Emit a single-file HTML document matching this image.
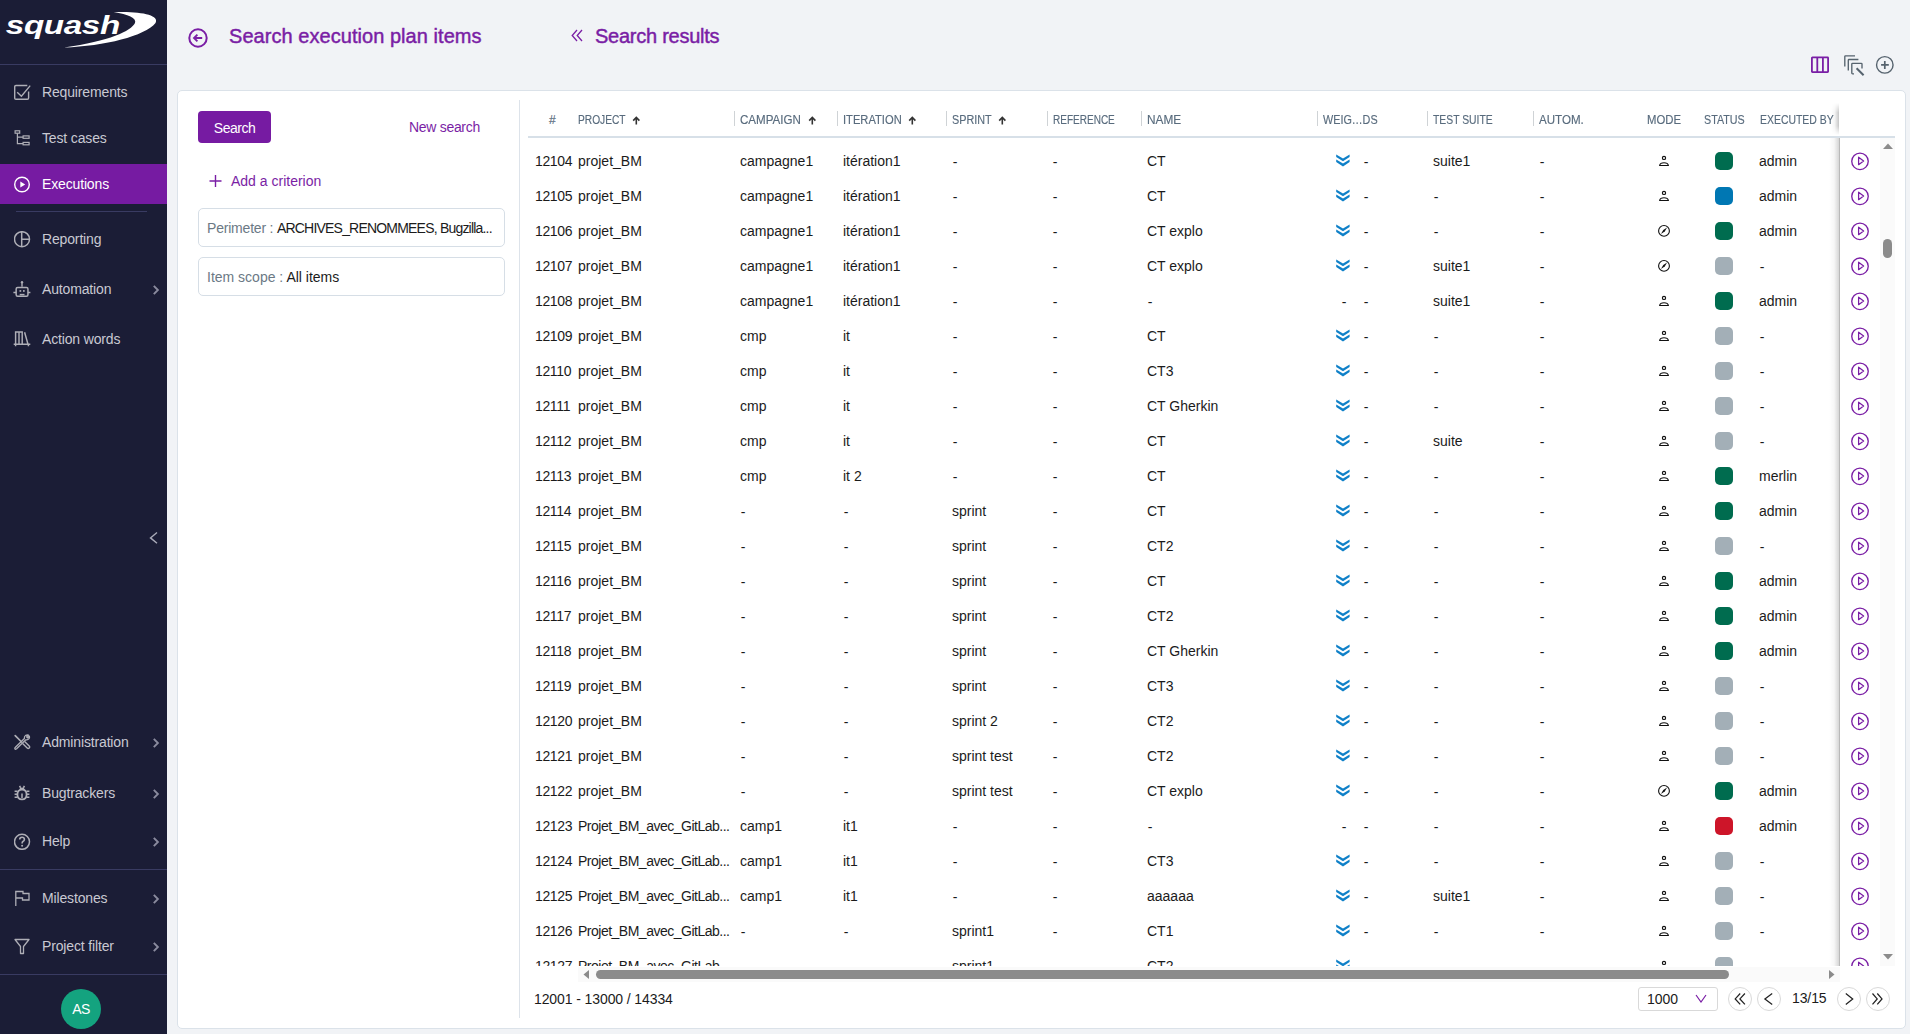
<!DOCTYPE html>
<html><head><meta charset="utf-8">
<style>
*{box-sizing:border-box;margin:0;padding:0}
html,body{width:1910px;height:1034px;overflow:hidden}
body{background:#f1f3f6;font-family:"Liberation Sans",sans-serif;color:#1b1b1b;position:relative}
.abs{position:absolute}
#side{position:absolute;left:0;top:0;width:167px;height:1034px;background:#1b1d36}
.nav{position:absolute;left:0;width:167px;height:40px;color:#c9c9d2;font-size:14px;letter-spacing:-0.15px}
.nav .lbl{position:absolute;left:42px;top:0;line-height:40px;white-space:nowrap}
.nav svg{position:absolute;left:14px;top:12px}
.nav .more{position:absolute;left:152px;top:15px}
.nav.active{background:#761ba2;color:#fff}
.hr{position:absolute;height:1px;background:#393b62}
#card{position:absolute;left:177px;top:90px;width:1729px;height:939px;background:#fff;border:1px solid #dbe2e9;border-radius:5px}
.ptitle{position:absolute;color:#7a1ea5;font-size:20px;white-space:nowrap;top:22px;line-height:28px;-webkit-text-stroke:0.45px #7a1ea5;letter-spacing:0.05px}
#grid{position:absolute;left:528px;top:100px;width:1367px;height:882px}
#ghead{position:absolute;left:0;top:0;width:1367px;height:38px;border-bottom:2px solid #d7e0e8}
.h{position:absolute;top:1px;line-height:38px;font-size:12px;color:#586b7d;white-space:nowrap;-webkit-text-stroke:0.15px #586b7d}
.ht{display:inline-block;transform-origin:0 50%}
.sep{position:absolute;top:11px;width:1px;height:15px;background:#cfd3d6}
.sarr{position:absolute;top:15.5px}
#vp{position:absolute;left:0;top:38px;width:1367px;height:828px;overflow:hidden}
.row{position:absolute;left:0;width:1367px;height:35px}
.c{position:absolute;top:0;line-height:35px;font-size:14px;white-space:nowrap;color:#1b1b1b}
.c.proj{letter-spacing:-0.5px}
.c.num{letter-spacing:-0.35px}
.c.dash{top:1px}
.ic{position:absolute;line-height:0}
.st{position:absolute;top:8.5px;width:18px;height:18px;border-radius:5px}
#pinshadow{position:absolute;left:1311px;top:38px;width:1px;height:828px;background:#b9b9b9}
#pinsh2{position:absolute;left:1301px;top:38px;width:10px;height:828px;background:linear-gradient(to right,rgba(0,0,0,0),rgba(0,0,0,0.03) 50%,rgba(0,0,0,0.16))}
#pinsh3{position:absolute;left:1303px;top:3px;width:8px;height:32px;background:linear-gradient(to right,rgba(0,0,0,0),rgba(0,0,0,0.04) 45%,rgba(0,0,0,0.22));-webkit-mask-image:linear-gradient(to bottom,transparent,#000 30%,#000 72%,transparent)}
#pinR{position:absolute;left:1312px;top:0;width:40px;height:866px;background:#fff}
#vscroll{position:absolute;left:1352px;top:38px;width:15px;height:828px;background:#fafafa}
#hscroll{position:absolute;left:50px;top:867px;width:1262px;height:15px;background:#fafafa}
</style></head><body>
<div id="side">
  <svg class="abs" style="left:0;top:0" width="167" height="64" viewBox="0 0 167 64">
    <text x="4.4" y="33.6" font-family="Liberation Sans" font-weight="bold" font-style="italic" font-size="25" fill="#fff" transform="scale(1.33,1)" style="letter-spacing:-0.3px">squash</text>
    <path d="M64 47.6 C105 46 145 36 155.5 23 C160 15 140 11 113.7 12.2 C128 14 137 18 135 23 C131 31 110 41 64 47.6 Z" fill="#fff"/>
  </svg>
  <div class="hr" style="left:0;top:64px;width:167px"></div>
  <div class="nav" style="top:72px"><svg width="18" height="17" viewBox="0 0 18 17" style="overflow:visible"><path d="M13.3 1.5 H2 Q0.7 1.5 0.7 2.8 V14.2 Q0.7 15.2 2 15.2 H13.3 Q14.6 15.2 14.6 14 V7.5" fill="none" stroke="#aeaeb6" stroke-width="1.4"/><path d="M3.2 8.2 L7.4 12.2 L16.2 1.6" fill="none" stroke="#aeaeb6" stroke-width="1.4"/></svg><span class="lbl">Requirements</span></div>
  <div class="nav" style="top:118px"><svg width="17" height="17" viewBox="0 0 17 17"><rect x="1.1" y="0.8" width="4.6" height="2.4" fill="none" stroke="#aeaeb6" stroke-width="1.2"/><rect x="9.1" y="5.9" width="6" height="2.4" fill="none" stroke="#aeaeb6" stroke-width="1.2"/><rect x="9.1" y="12.4" width="6" height="2.4" fill="none" stroke="#aeaeb6" stroke-width="1.2"/><path d="M3.4 3.2 V13.6 H9.1 M3.4 7.1 H9.1" fill="none" stroke="#aeaeb6" stroke-width="1.2"/></svg><span class="lbl">Test cases</span></div>
  <div class="nav active" style="top:164px"><svg width="17" height="17" viewBox="0 0 17 17"><circle cx="8" cy="8.5" r="7.3" fill="none" stroke="#fff" stroke-width="1.4"/><path d="M6.3 5.4 L11.2 8.5 L6.3 11.6 Z" fill="#fff"/></svg><span class="lbl">Executions</span></div>
  <div class="hr" style="left:16px;top:211px;width:131px"></div>
  <div class="nav" style="top:219px"><svg width="17" height="17" viewBox="0 0 17 17"><circle cx="8" cy="8.2" r="7.5" fill="none" stroke="#aeaeb6" stroke-width="1.5"/><path d="M7.7 0.8 V15.6 M7.7 8.2 H15.5" fill="none" stroke="#aeaeb6" stroke-width="1.5"/></svg><span class="lbl">Reporting</span></div>
  <div class="nav" style="top:269px"><svg width="17" height="17" viewBox="0 0 17 17" style="overflow:visible"><path d="M8 1.5 V5.7" stroke="#aeaeb6" stroke-width="1.4"/><circle cx="8" cy="1.3" r="1.2" fill="#aeaeb6"/><rect x="2.15" y="6.45" width="11.8" height="8.9" rx="1.5" fill="none" stroke="#aeaeb6" stroke-width="1.5"/><path d="M-0.6 11.5 H2.15 M13.95 11.5 H16.4" stroke="#aeaeb6" stroke-width="1.5"/><rect x="5.5" y="9.1" width="1.7" height="1.7" fill="#aeaeb6"/><rect x="9" y="9.1" width="1.7" height="1.7" fill="#aeaeb6"/><path d="M5.7 13.6 H10.5" stroke="#aeaeb6" stroke-width="1.5"/></svg><span class="lbl">Automation</span><svg class="more" width="8" height="12" viewBox="0 0 8 12"><path d="M1.8 1.8 L5.9 6 L1.8 10.2" fill="none" stroke="#8a8b9e" stroke-width="1.9"/></svg></div>
  <div class="nav" style="top:319px"><svg width="17" height="17" viewBox="0 0 17 17" style="overflow:visible"><path d="M1.6 13.2 V0.9 H8.2 V13.2 M5 0.9 V13.2 M10.6 1.2 L14 13.2 M-0.3 13.3 H16.3 M1.6 13.3 V15.3 M14.4 13.3 V15.3" fill="none" stroke="#aeaeb6" stroke-width="1.45"/></svg><span class="lbl">Action words</span></div>
  <svg class="abs" style="left:149px;top:531px" width="9" height="14" viewBox="0 0 9 14"><path d="M8 1.5 L1.5 6.9 L8 12.3" fill="none" stroke="#a9aab8" stroke-width="1.4"/></svg>
  <div class="nav" style="top:722px"><svg width="17" height="17" viewBox="0 0 17 17" style="overflow:visible"><path d="M1.2 1.6 L7.6 8" fill="none" stroke="#aeaeb6" stroke-width="1.7" stroke-linecap="round"/><path d="M8.6 9.4 L13.2 14 Q14.2 15 15.2 14 Q16.2 13 15.2 12 L10.6 7.4" fill="none" stroke="#aeaeb6" stroke-width="1.4"/><path d="M2.6 14.8 Q1.4 15.6 0.9 14.9 Q0.4 14.2 1.4 13.3 L10.4 4.5 Q10 2.4 11.8 1.3 Q13.2 0.6 14.4 1 L12.6 2.9 L13.4 3.9 L15.4 2.1 Q15.8 3.5 15 4.7 Q13.8 6.3 11.8 5.8 Z" fill="none" stroke="#aeaeb6" stroke-width="1.3" stroke-linejoin="round"/></svg><span class="lbl">Administration</span><svg class="more" width="8" height="12" viewBox="0 0 8 12"><path d="M1.8 1.8 L5.9 6 L1.8 10.2" fill="none" stroke="#8a8b9e" stroke-width="1.9"/></svg></div>
  <div class="nav" style="top:773px"><svg width="17" height="17" viewBox="0 0 17 17" style="overflow:visible"><path d="M3.4 9.5 Q3.4 4.6 8 4.6 Q12.6 4.6 12.6 9.5 Q12.6 14.4 8 14.4 Q3.4 14.4 3.4 9.5 Z" fill="none" stroke="#aeaeb6" stroke-width="1.8"/><path d="M5.2 5 Q5.5 2.6 8 2.6 Q10.5 2.6 10.8 5 Z" fill="#aeaeb6"/><path d="M8 8.4 V13 M0.6 6.3 H3.4 M12.6 6.3 H15.4 M0.6 9.3 H3.4 M12.6 9.3 H15.4 M0.6 12.3 H3.4 M12.6 12.3 H15.4 M5.6 0.8 L6.6 2.8 M10.4 0.8 L9.4 2.8" stroke="#aeaeb6" stroke-width="1.5"/></svg><span class="lbl">Bugtrackers</span><svg class="more" width="8" height="12" viewBox="0 0 8 12"><path d="M1.8 1.8 L5.9 6 L1.8 10.2" fill="none" stroke="#8a8b9e" stroke-width="1.9"/></svg></div>
  <div class="nav" style="top:821px"><svg width="17" height="17" viewBox="0 0 17 17"><circle cx="8" cy="8.8" r="7.5" fill="none" stroke="#aeaeb6" stroke-width="1.5"/><path d="M5.7 6.6 Q5.7 4.3 8 4.3 Q10.4 4.3 10.4 6.4 Q10.4 7.7 8.9 8.5 Q8.1 9 8.1 10.6" fill="none" stroke="#aeaeb6" stroke-width="1.6"/><circle cx="8.1" cy="12.8" r="1" fill="#aeaeb6"/></svg><span class="lbl">Help</span><svg class="more" width="8" height="12" viewBox="0 0 8 12"><path d="M1.8 1.8 L5.9 6 L1.8 10.2" fill="none" stroke="#8a8b9e" stroke-width="1.9"/></svg></div>
  <div class="hr" style="left:0;top:869px;width:167px"></div>
  <div class="nav" style="top:878px"><svg width="17" height="17" viewBox="0 0 17 17"><path d="M1.8 16 V1.5 H9 L9 3.5 H15 V10 H8.5 V8 H1.8" fill="none" stroke="#aeaeb6" stroke-width="1.3"/></svg><span class="lbl">Milestones</span><svg class="more" width="8" height="12" viewBox="0 0 8 12"><path d="M1.8 1.8 L5.9 6 L1.8 10.2" fill="none" stroke="#8a8b9e" stroke-width="1.9"/></svg></div>
  <div class="nav" style="top:926px"><svg width="17" height="17" viewBox="0 0 17 17"><path d="M1 1.5 H15 L9.5 8.5 V15.5 H6.5 V8.5 Z" fill="none" stroke="#aeaeb6" stroke-width="1.3" stroke-linejoin="round"/></svg><span class="lbl">Project filter</span><svg class="more" width="8" height="12" viewBox="0 0 8 12"><path d="M1.8 1.8 L5.9 6 L1.8 10.2" fill="none" stroke="#8a8b9e" stroke-width="1.9"/></svg></div>
  <div class="hr" style="left:0;top:974px;width:167px"></div>
  <div class="abs" style="left:61px;top:989px;width:40px;height:40px;border-radius:50%;background:#14a37f;color:#fff;font-size:14px;line-height:40px;text-align:center;letter-spacing:-0.6px">AS</div>
</div>

<!-- page header -->
<svg class="abs" style="left:187px;top:27px" width="22" height="22" viewBox="0 0 22 22"><circle cx="11" cy="11" r="8.7" fill="none" stroke="#7a1ea5" stroke-width="2"/><path d="M15.2 11 H7.2 M10.4 7.6 L7 11 L10.4 14.4" fill="none" stroke="#7a1ea5" stroke-width="1.9"/></svg>
<div class="ptitle" style="left:229px">Search execution plan items</div>
<svg class="abs" style="left:571px;top:28.5px" width="12" height="13" viewBox="0 0 12 13"><path d="M6 1 L1.2 6.5 L6 12 M11 1 L6.2 6.5 L11 12" fill="none" stroke="#7a1ea5" stroke-width="1.3"/></svg>
<div class="ptitle" style="left:595px;letter-spacing:-0.25px">Search results</div>
<svg class="abs" style="left:1810px;top:55px" width="20" height="19" viewBox="0 0 20 19"><rect x="1.9" y="2.4" width="16.2" height="14.7" rx="0.5" fill="none" stroke="#7a1ea5" stroke-width="1.8"/><path d="M7.3 2.4 V17.1 M12.9 2.4 V17.1" stroke="#7a1ea5" stroke-width="1.8"/></svg>
<svg class="abs" style="left:1843px;top:54px" width="23" height="23" viewBox="0 0 23 23"><path d="M1.8 12.6 V2.6 Q1.8 1.9 2.5 1.9 H12" fill="none" stroke="#56636e" stroke-width="1.35"/><path d="M5.3 16.5 V6.2 Q5.3 5.5 6 5.5 H15.4" fill="none" stroke="#56636e" stroke-width="1.35"/><path d="M11 19.9 H9.6 Q8.8 19.9 8.8 19.1 V10.1 Q8.8 9.3 9.6 9.3 H18.2 Q19 9.3 19 10.1 V14.5" fill="none" stroke="#56636e" stroke-width="1.35"/><path d="M13.6 14.3 L20.6 21.2" stroke="#56636e" stroke-width="2.1"/></svg>
<svg class="abs" style="left:1874px;top:54px" width="22" height="22" viewBox="0 0 22 22"><circle cx="10.8" cy="10.9" r="8.25" fill="none" stroke="#56636e" stroke-width="1.4"/><path d="M10.8 7 V14.9 M7.1 10.9 H14.8" stroke="#56636e" stroke-width="1.7"/></svg>

<div id="card"></div>
<!-- left filter panel -->
<div class="abs" style="left:519px;top:100px;width:1px;height:918px;background:#dde3ea"></div>
<div class="abs" style="left:198px;top:111px;width:73px;height:32px;background:#761ba2;border-radius:4px;color:#fff;font-size:14px;line-height:34px;text-align:center;letter-spacing:-0.5px">Search</div>
<div class="abs" style="left:409px;top:117px;color:#7a1ea5;font-size:14px;line-height:20px;letter-spacing:-0.3px">New search</div>
<svg class="abs" style="left:208px;top:174px" width="14" height="14" viewBox="0 0 14 14"><path d="M7.5 1 V13 M1.5 7 H13.5" stroke="#7a1ea5" stroke-width="1.4"/></svg>
<div class="abs" style="left:231px;top:171px;color:#7a1ea5;font-size:14px;line-height:20px">Add a criterion</div>
<div class="abs" style="left:198px;top:208px;width:307px;height:39px;border:1px solid #d6dee6;border-radius:5px"></div>
<div class="abs" style="left:207px;top:218px;font-size:14px;line-height:20px;white-space:nowrap"><span style="color:#6b7985;letter-spacing:-0.2px">Perimeter : </span><span style="letter-spacing:-0.8px">ARCHIVES_RENOMMEES, Bugzilla...</span></div>
<div class="abs" style="left:198px;top:257px;width:307px;height:39px;border:1px solid #d6dee6;border-radius:5px"></div>
<div class="abs" style="left:207px;top:267px;font-size:14px;line-height:20px;white-space:nowrap"><span style="color:#6b7985">Item scope : </span><span>All items</span></div>

<div id="grid">
  <div id="ghead"><span class="h" style="left:21px"><span class="ht" style="transform:scaleX(1.0)">#</span></span><span class="h" style="left:50.39999999999998px"><span class="ht" style="transform:scaleX(0.85)">PROJECT</span></span><span class="sep" style="left:206.39999999999998px"></span><span class="h" style="left:212.39999999999998px"><span class="ht" style="transform:scaleX(0.965)">CAMPAIGN</span></span><span class="sep" style="left:309.29999999999995px"></span><span class="h" style="left:315.29999999999995px"><span class="ht" style="transform:scaleX(0.93)">ITERATION</span></span><span class="sep" style="left:418.29999999999995px"></span><span class="h" style="left:424.29999999999995px"><span class="ht" style="transform:scaleX(0.9)">SPRINT</span></span><span class="sep" style="left:518.5px"></span><span class="h" style="left:524.5px"><span class="ht" style="transform:scaleX(0.835)">REFERENCE</span></span><span class="sep" style="left:613.4000000000001px"></span><span class="h" style="left:619.4000000000001px"><span class="ht" style="transform:scaleX(0.985)">NAME</span></span><span class="sep" style="left:789.2px"></span><span class="h" style="left:795.2px"><span class="ht" style="transform:scaleX(0.9)">WEIG…DS</span></span><span class="sep" style="left:899.3px"></span><span class="h" style="left:905.3px"><span class="ht" style="transform:scaleX(0.864)">TEST SUITE</span></span><span class="sep" style="left:1005.3px"></span><span class="h" style="left:1011.3px"><span class="ht" style="transform:scaleX(0.965)">AUTOM.</span></span><span class="h" style="left:1119px"><span class="ht" style="transform:scaleX(0.944)">MODE</span></span><span class="h" style="left:1175.6px"><span class="ht" style="transform:scaleX(0.894)">STATUS</span></span><span class="h" style="left:1231.5px"><span class="ht" style="transform:scaleX(0.87)">EXECUTED BY</span></span><svg class="sarr" style="left:104px" width="9" height="9" viewBox="0 0 9 9"><path d="M4.3 8.5 V1.6 M1.2 4.6 L4.3 1.4 L7.4 4.6" fill="none" stroke="#333" stroke-width="1.6"/></svg><svg class="sarr" style="left:279.5px" width="9" height="9" viewBox="0 0 9 9"><path d="M4.3 8.5 V1.6 M1.2 4.6 L4.3 1.4 L7.4 4.6" fill="none" stroke="#333" stroke-width="1.6"/></svg><svg class="sarr" style="left:380px" width="9" height="9" viewBox="0 0 9 9"><path d="M4.3 8.5 V1.6 M1.2 4.6 L4.3 1.4 L7.4 4.6" fill="none" stroke="#333" stroke-width="1.6"/></svg><svg class="sarr" style="left:469.70000000000005px" width="9" height="9" viewBox="0 0 9 9"><path d="M4.3 8.5 V1.6 M1.2 4.6 L4.3 1.4 L7.4 4.6" fill="none" stroke="#333" stroke-width="1.6"/></svg></div>
  <div id="vp">
<div class="row" style="top:5.5px"><span class="c num" style="left:7px">12104</span><span class="c " style="left:50px">projet_BM</span><span class="c " style="left:212px">campagne1</span><span class="c " style="left:315px">itération1</span><span class="c dash" style="left:424.8px">-</span><span class="c dash" style="left:524.8px">-</span><span class="c " style="left:619px">CT</span><span class="ic" style="left:808px;top:10px"><svg class="chev" width="14" height="13" viewBox="0 0 14 13"><path d="M0.2 0.4 L7 4.6 L13.6 0.4 L13.6 3.1 L7 7.3 L0.2 3.1 Z M0.2 5.4 L7 9.5 L13.6 5.4 L13.6 8.1 L7 12.4 L0.2 8.1 Z" fill="#0f80c8"/></svg></span><span class="c dash" style="left:835.8px">-</span><span class="c " style="left:905px">suite1</span><span class="c dash" style="left:1011.8px">-</span><span class="ic" style="left:1126px;top:6.5px"><svg class="mode" width="20" height="20" viewBox="0 0 20 20"><circle cx="10" cy="7.93" r="1.6" fill="none" stroke="#111" stroke-width="1.15"/><path d="M5.6 15.5 Q6.2 12.7 10 12.7 Q13.8 12.7 14.4 15.5 Z" fill="none" stroke="#111" stroke-width="1.15" stroke-linejoin="round"/></svg></span><span class="st" style="left:1187px;background:#006c4f"></span><span class="c " style="left:1231px">admin</span><span class="ic" style="left:1322px;top:7px"><svg class="play" width="20" height="20" viewBox="0 0 20 20"><circle cx="10" cy="10.3" r="8.25" fill="none" stroke="#7a1ea5" stroke-width="1.35"/><path d="M8.6 6.2 L13.6 10 L8.6 13.7 Z" fill="none" stroke="#7a1ea5" stroke-width="1.25" stroke-linejoin="round"/></svg></span></div>
<div class="row" style="top:40.5px"><span class="c num" style="left:7px">12105</span><span class="c " style="left:50px">projet_BM</span><span class="c " style="left:212px">campagne1</span><span class="c " style="left:315px">itération1</span><span class="c dash" style="left:424.8px">-</span><span class="c dash" style="left:524.8px">-</span><span class="c " style="left:619px">CT</span><span class="ic" style="left:808px;top:10px"><svg class="chev" width="14" height="13" viewBox="0 0 14 13"><path d="M0.2 0.4 L7 4.6 L13.6 0.4 L13.6 3.1 L7 7.3 L0.2 3.1 Z M0.2 5.4 L7 9.5 L13.6 5.4 L13.6 8.1 L7 12.4 L0.2 8.1 Z" fill="#0f80c8"/></svg></span><span class="c dash" style="left:835.8px">-</span><span class="c dash" style="left:905.8px">-</span><span class="c dash" style="left:1011.8px">-</span><span class="ic" style="left:1126px;top:6.5px"><svg class="mode" width="20" height="20" viewBox="0 0 20 20"><circle cx="10" cy="7.93" r="1.6" fill="none" stroke="#111" stroke-width="1.15"/><path d="M5.6 15.5 Q6.2 12.7 10 12.7 Q13.8 12.7 14.4 15.5 Z" fill="none" stroke="#111" stroke-width="1.15" stroke-linejoin="round"/></svg></span><span class="st" style="left:1187px;background:#0077b3"></span><span class="c " style="left:1231px">admin</span><span class="ic" style="left:1322px;top:7px"><svg class="play" width="20" height="20" viewBox="0 0 20 20"><circle cx="10" cy="10.3" r="8.25" fill="none" stroke="#7a1ea5" stroke-width="1.35"/><path d="M8.6 6.2 L13.6 10 L8.6 13.7 Z" fill="none" stroke="#7a1ea5" stroke-width="1.25" stroke-linejoin="round"/></svg></span></div>
<div class="row" style="top:75.5px"><span class="c num" style="left:7px">12106</span><span class="c " style="left:50px">projet_BM</span><span class="c " style="left:212px">campagne1</span><span class="c " style="left:315px">itération1</span><span class="c dash" style="left:424.8px">-</span><span class="c dash" style="left:524.8px">-</span><span class="c " style="left:619px">CT explo</span><span class="ic" style="left:808px;top:10px"><svg class="chev" width="14" height="13" viewBox="0 0 14 13"><path d="M0.2 0.4 L7 4.6 L13.6 0.4 L13.6 3.1 L7 7.3 L0.2 3.1 Z M0.2 5.4 L7 9.5 L13.6 5.4 L13.6 8.1 L7 12.4 L0.2 8.1 Z" fill="#0f80c8"/></svg></span><span class="c dash" style="left:835.8px">-</span><span class="c dash" style="left:905.8px">-</span><span class="c dash" style="left:1011.8px">-</span><span class="ic" style="left:1126px;top:6.5px"><svg class="mode" width="20" height="20" viewBox="0 0 20 20"><circle cx="10" cy="10.9" r="5.4" fill="none" stroke="#111" stroke-width="1.1"/><path d="M6.9 14 L9.28 10.1 L13.1 7.6 L10.72 11.5 Z" fill="#111"/></svg></span><span class="st" style="left:1187px;background:#006c4f"></span><span class="c " style="left:1231px">admin</span><span class="ic" style="left:1322px;top:7px"><svg class="play" width="20" height="20" viewBox="0 0 20 20"><circle cx="10" cy="10.3" r="8.25" fill="none" stroke="#7a1ea5" stroke-width="1.35"/><path d="M8.6 6.2 L13.6 10 L8.6 13.7 Z" fill="none" stroke="#7a1ea5" stroke-width="1.25" stroke-linejoin="round"/></svg></span></div>
<div class="row" style="top:110.5px"><span class="c num" style="left:7px">12107</span><span class="c " style="left:50px">projet_BM</span><span class="c " style="left:212px">campagne1</span><span class="c " style="left:315px">itération1</span><span class="c dash" style="left:424.8px">-</span><span class="c dash" style="left:524.8px">-</span><span class="c " style="left:619px">CT explo</span><span class="ic" style="left:808px;top:10px"><svg class="chev" width="14" height="13" viewBox="0 0 14 13"><path d="M0.2 0.4 L7 4.6 L13.6 0.4 L13.6 3.1 L7 7.3 L0.2 3.1 Z M0.2 5.4 L7 9.5 L13.6 5.4 L13.6 8.1 L7 12.4 L0.2 8.1 Z" fill="#0f80c8"/></svg></span><span class="c dash" style="left:835.8px">-</span><span class="c " style="left:905px">suite1</span><span class="c dash" style="left:1011.8px">-</span><span class="ic" style="left:1126px;top:6.5px"><svg class="mode" width="20" height="20" viewBox="0 0 20 20"><circle cx="10" cy="10.9" r="5.4" fill="none" stroke="#111" stroke-width="1.1"/><path d="M6.9 14 L9.28 10.1 L13.1 7.6 L10.72 11.5 Z" fill="#111"/></svg></span><span class="st" style="left:1187px;background:#a3afb7"></span><span class="c dash" style="left:1231.8px">-</span><span class="ic" style="left:1322px;top:7px"><svg class="play" width="20" height="20" viewBox="0 0 20 20"><circle cx="10" cy="10.3" r="8.25" fill="none" stroke="#7a1ea5" stroke-width="1.35"/><path d="M8.6 6.2 L13.6 10 L8.6 13.7 Z" fill="none" stroke="#7a1ea5" stroke-width="1.25" stroke-linejoin="round"/></svg></span></div>
<div class="row" style="top:145.5px"><span class="c num" style="left:7px">12108</span><span class="c " style="left:50px">projet_BM</span><span class="c " style="left:212px">campagne1</span><span class="c " style="left:315px">itération1</span><span class="c dash" style="left:424.8px">-</span><span class="c dash" style="left:524.8px">-</span><span class="c dash" style="left:619.8px">-</span><span class="c dash" style="left:813.8px">-</span><span class="c dash" style="left:835.8px">-</span><span class="c " style="left:905px">suite1</span><span class="c dash" style="left:1011.8px">-</span><span class="ic" style="left:1126px;top:6.5px"><svg class="mode" width="20" height="20" viewBox="0 0 20 20"><circle cx="10" cy="7.93" r="1.6" fill="none" stroke="#111" stroke-width="1.15"/><path d="M5.6 15.5 Q6.2 12.7 10 12.7 Q13.8 12.7 14.4 15.5 Z" fill="none" stroke="#111" stroke-width="1.15" stroke-linejoin="round"/></svg></span><span class="st" style="left:1187px;background:#006c4f"></span><span class="c " style="left:1231px">admin</span><span class="ic" style="left:1322px;top:7px"><svg class="play" width="20" height="20" viewBox="0 0 20 20"><circle cx="10" cy="10.3" r="8.25" fill="none" stroke="#7a1ea5" stroke-width="1.35"/><path d="M8.6 6.2 L13.6 10 L8.6 13.7 Z" fill="none" stroke="#7a1ea5" stroke-width="1.25" stroke-linejoin="round"/></svg></span></div>
<div class="row" style="top:180.5px"><span class="c num" style="left:7px">12109</span><span class="c " style="left:50px">projet_BM</span><span class="c " style="left:212px">cmp</span><span class="c " style="left:315px">it</span><span class="c dash" style="left:424.8px">-</span><span class="c dash" style="left:524.8px">-</span><span class="c " style="left:619px">CT</span><span class="ic" style="left:808px;top:10px"><svg class="chev" width="14" height="13" viewBox="0 0 14 13"><path d="M0.2 0.4 L7 4.6 L13.6 0.4 L13.6 3.1 L7 7.3 L0.2 3.1 Z M0.2 5.4 L7 9.5 L13.6 5.4 L13.6 8.1 L7 12.4 L0.2 8.1 Z" fill="#0f80c8"/></svg></span><span class="c dash" style="left:835.8px">-</span><span class="c dash" style="left:905.8px">-</span><span class="c dash" style="left:1011.8px">-</span><span class="ic" style="left:1126px;top:6.5px"><svg class="mode" width="20" height="20" viewBox="0 0 20 20"><circle cx="10" cy="7.93" r="1.6" fill="none" stroke="#111" stroke-width="1.15"/><path d="M5.6 15.5 Q6.2 12.7 10 12.7 Q13.8 12.7 14.4 15.5 Z" fill="none" stroke="#111" stroke-width="1.15" stroke-linejoin="round"/></svg></span><span class="st" style="left:1187px;background:#a3afb7"></span><span class="c dash" style="left:1231.8px">-</span><span class="ic" style="left:1322px;top:7px"><svg class="play" width="20" height="20" viewBox="0 0 20 20"><circle cx="10" cy="10.3" r="8.25" fill="none" stroke="#7a1ea5" stroke-width="1.35"/><path d="M8.6 6.2 L13.6 10 L8.6 13.7 Z" fill="none" stroke="#7a1ea5" stroke-width="1.25" stroke-linejoin="round"/></svg></span></div>
<div class="row" style="top:215.5px"><span class="c num" style="left:7px">12110</span><span class="c " style="left:50px">projet_BM</span><span class="c " style="left:212px">cmp</span><span class="c " style="left:315px">it</span><span class="c dash" style="left:424.8px">-</span><span class="c dash" style="left:524.8px">-</span><span class="c " style="left:619px">CT3</span><span class="ic" style="left:808px;top:10px"><svg class="chev" width="14" height="13" viewBox="0 0 14 13"><path d="M0.2 0.4 L7 4.6 L13.6 0.4 L13.6 3.1 L7 7.3 L0.2 3.1 Z M0.2 5.4 L7 9.5 L13.6 5.4 L13.6 8.1 L7 12.4 L0.2 8.1 Z" fill="#0f80c8"/></svg></span><span class="c dash" style="left:835.8px">-</span><span class="c dash" style="left:905.8px">-</span><span class="c dash" style="left:1011.8px">-</span><span class="ic" style="left:1126px;top:6.5px"><svg class="mode" width="20" height="20" viewBox="0 0 20 20"><circle cx="10" cy="7.93" r="1.6" fill="none" stroke="#111" stroke-width="1.15"/><path d="M5.6 15.5 Q6.2 12.7 10 12.7 Q13.8 12.7 14.4 15.5 Z" fill="none" stroke="#111" stroke-width="1.15" stroke-linejoin="round"/></svg></span><span class="st" style="left:1187px;background:#a3afb7"></span><span class="c dash" style="left:1231.8px">-</span><span class="ic" style="left:1322px;top:7px"><svg class="play" width="20" height="20" viewBox="0 0 20 20"><circle cx="10" cy="10.3" r="8.25" fill="none" stroke="#7a1ea5" stroke-width="1.35"/><path d="M8.6 6.2 L13.6 10 L8.6 13.7 Z" fill="none" stroke="#7a1ea5" stroke-width="1.25" stroke-linejoin="round"/></svg></span></div>
<div class="row" style="top:250.5px"><span class="c num" style="left:7px">12111</span><span class="c " style="left:50px">projet_BM</span><span class="c " style="left:212px">cmp</span><span class="c " style="left:315px">it</span><span class="c dash" style="left:424.8px">-</span><span class="c dash" style="left:524.8px">-</span><span class="c " style="left:619px">CT Gherkin</span><span class="ic" style="left:808px;top:10px"><svg class="chev" width="14" height="13" viewBox="0 0 14 13"><path d="M0.2 0.4 L7 4.6 L13.6 0.4 L13.6 3.1 L7 7.3 L0.2 3.1 Z M0.2 5.4 L7 9.5 L13.6 5.4 L13.6 8.1 L7 12.4 L0.2 8.1 Z" fill="#0f80c8"/></svg></span><span class="c dash" style="left:835.8px">-</span><span class="c dash" style="left:905.8px">-</span><span class="c dash" style="left:1011.8px">-</span><span class="ic" style="left:1126px;top:6.5px"><svg class="mode" width="20" height="20" viewBox="0 0 20 20"><circle cx="10" cy="7.93" r="1.6" fill="none" stroke="#111" stroke-width="1.15"/><path d="M5.6 15.5 Q6.2 12.7 10 12.7 Q13.8 12.7 14.4 15.5 Z" fill="none" stroke="#111" stroke-width="1.15" stroke-linejoin="round"/></svg></span><span class="st" style="left:1187px;background:#a3afb7"></span><span class="c dash" style="left:1231.8px">-</span><span class="ic" style="left:1322px;top:7px"><svg class="play" width="20" height="20" viewBox="0 0 20 20"><circle cx="10" cy="10.3" r="8.25" fill="none" stroke="#7a1ea5" stroke-width="1.35"/><path d="M8.6 6.2 L13.6 10 L8.6 13.7 Z" fill="none" stroke="#7a1ea5" stroke-width="1.25" stroke-linejoin="round"/></svg></span></div>
<div class="row" style="top:285.5px"><span class="c num" style="left:7px">12112</span><span class="c " style="left:50px">projet_BM</span><span class="c " style="left:212px">cmp</span><span class="c " style="left:315px">it</span><span class="c dash" style="left:424.8px">-</span><span class="c dash" style="left:524.8px">-</span><span class="c " style="left:619px">CT</span><span class="ic" style="left:808px;top:10px"><svg class="chev" width="14" height="13" viewBox="0 0 14 13"><path d="M0.2 0.4 L7 4.6 L13.6 0.4 L13.6 3.1 L7 7.3 L0.2 3.1 Z M0.2 5.4 L7 9.5 L13.6 5.4 L13.6 8.1 L7 12.4 L0.2 8.1 Z" fill="#0f80c8"/></svg></span><span class="c dash" style="left:835.8px">-</span><span class="c " style="left:905px">suite</span><span class="c dash" style="left:1011.8px">-</span><span class="ic" style="left:1126px;top:6.5px"><svg class="mode" width="20" height="20" viewBox="0 0 20 20"><circle cx="10" cy="7.93" r="1.6" fill="none" stroke="#111" stroke-width="1.15"/><path d="M5.6 15.5 Q6.2 12.7 10 12.7 Q13.8 12.7 14.4 15.5 Z" fill="none" stroke="#111" stroke-width="1.15" stroke-linejoin="round"/></svg></span><span class="st" style="left:1187px;background:#a3afb7"></span><span class="c dash" style="left:1231.8px">-</span><span class="ic" style="left:1322px;top:7px"><svg class="play" width="20" height="20" viewBox="0 0 20 20"><circle cx="10" cy="10.3" r="8.25" fill="none" stroke="#7a1ea5" stroke-width="1.35"/><path d="M8.6 6.2 L13.6 10 L8.6 13.7 Z" fill="none" stroke="#7a1ea5" stroke-width="1.25" stroke-linejoin="round"/></svg></span></div>
<div class="row" style="top:320.5px"><span class="c num" style="left:7px">12113</span><span class="c " style="left:50px">projet_BM</span><span class="c " style="left:212px">cmp</span><span class="c " style="left:315px">it 2</span><span class="c dash" style="left:424.8px">-</span><span class="c dash" style="left:524.8px">-</span><span class="c " style="left:619px">CT</span><span class="ic" style="left:808px;top:10px"><svg class="chev" width="14" height="13" viewBox="0 0 14 13"><path d="M0.2 0.4 L7 4.6 L13.6 0.4 L13.6 3.1 L7 7.3 L0.2 3.1 Z M0.2 5.4 L7 9.5 L13.6 5.4 L13.6 8.1 L7 12.4 L0.2 8.1 Z" fill="#0f80c8"/></svg></span><span class="c dash" style="left:835.8px">-</span><span class="c dash" style="left:905.8px">-</span><span class="c dash" style="left:1011.8px">-</span><span class="ic" style="left:1126px;top:6.5px"><svg class="mode" width="20" height="20" viewBox="0 0 20 20"><circle cx="10" cy="7.93" r="1.6" fill="none" stroke="#111" stroke-width="1.15"/><path d="M5.6 15.5 Q6.2 12.7 10 12.7 Q13.8 12.7 14.4 15.5 Z" fill="none" stroke="#111" stroke-width="1.15" stroke-linejoin="round"/></svg></span><span class="st" style="left:1187px;background:#006c4f"></span><span class="c " style="left:1231px">merlin</span><span class="ic" style="left:1322px;top:7px"><svg class="play" width="20" height="20" viewBox="0 0 20 20"><circle cx="10" cy="10.3" r="8.25" fill="none" stroke="#7a1ea5" stroke-width="1.35"/><path d="M8.6 6.2 L13.6 10 L8.6 13.7 Z" fill="none" stroke="#7a1ea5" stroke-width="1.25" stroke-linejoin="round"/></svg></span></div>
<div class="row" style="top:355.5px"><span class="c num" style="left:7px">12114</span><span class="c " style="left:50px">projet_BM</span><span class="c dash" style="left:212.8px">-</span><span class="c dash" style="left:315.8px">-</span><span class="c " style="left:424px">sprint</span><span class="c dash" style="left:524.8px">-</span><span class="c " style="left:619px">CT</span><span class="ic" style="left:808px;top:10px"><svg class="chev" width="14" height="13" viewBox="0 0 14 13"><path d="M0.2 0.4 L7 4.6 L13.6 0.4 L13.6 3.1 L7 7.3 L0.2 3.1 Z M0.2 5.4 L7 9.5 L13.6 5.4 L13.6 8.1 L7 12.4 L0.2 8.1 Z" fill="#0f80c8"/></svg></span><span class="c dash" style="left:835.8px">-</span><span class="c dash" style="left:905.8px">-</span><span class="c dash" style="left:1011.8px">-</span><span class="ic" style="left:1126px;top:6.5px"><svg class="mode" width="20" height="20" viewBox="0 0 20 20"><circle cx="10" cy="7.93" r="1.6" fill="none" stroke="#111" stroke-width="1.15"/><path d="M5.6 15.5 Q6.2 12.7 10 12.7 Q13.8 12.7 14.4 15.5 Z" fill="none" stroke="#111" stroke-width="1.15" stroke-linejoin="round"/></svg></span><span class="st" style="left:1187px;background:#006c4f"></span><span class="c " style="left:1231px">admin</span><span class="ic" style="left:1322px;top:7px"><svg class="play" width="20" height="20" viewBox="0 0 20 20"><circle cx="10" cy="10.3" r="8.25" fill="none" stroke="#7a1ea5" stroke-width="1.35"/><path d="M8.6 6.2 L13.6 10 L8.6 13.7 Z" fill="none" stroke="#7a1ea5" stroke-width="1.25" stroke-linejoin="round"/></svg></span></div>
<div class="row" style="top:390.5px"><span class="c num" style="left:7px">12115</span><span class="c " style="left:50px">projet_BM</span><span class="c dash" style="left:212.8px">-</span><span class="c dash" style="left:315.8px">-</span><span class="c " style="left:424px">sprint</span><span class="c dash" style="left:524.8px">-</span><span class="c " style="left:619px">CT2</span><span class="ic" style="left:808px;top:10px"><svg class="chev" width="14" height="13" viewBox="0 0 14 13"><path d="M0.2 0.4 L7 4.6 L13.6 0.4 L13.6 3.1 L7 7.3 L0.2 3.1 Z M0.2 5.4 L7 9.5 L13.6 5.4 L13.6 8.1 L7 12.4 L0.2 8.1 Z" fill="#0f80c8"/></svg></span><span class="c dash" style="left:835.8px">-</span><span class="c dash" style="left:905.8px">-</span><span class="c dash" style="left:1011.8px">-</span><span class="ic" style="left:1126px;top:6.5px"><svg class="mode" width="20" height="20" viewBox="0 0 20 20"><circle cx="10" cy="7.93" r="1.6" fill="none" stroke="#111" stroke-width="1.15"/><path d="M5.6 15.5 Q6.2 12.7 10 12.7 Q13.8 12.7 14.4 15.5 Z" fill="none" stroke="#111" stroke-width="1.15" stroke-linejoin="round"/></svg></span><span class="st" style="left:1187px;background:#a3afb7"></span><span class="c dash" style="left:1231.8px">-</span><span class="ic" style="left:1322px;top:7px"><svg class="play" width="20" height="20" viewBox="0 0 20 20"><circle cx="10" cy="10.3" r="8.25" fill="none" stroke="#7a1ea5" stroke-width="1.35"/><path d="M8.6 6.2 L13.6 10 L8.6 13.7 Z" fill="none" stroke="#7a1ea5" stroke-width="1.25" stroke-linejoin="round"/></svg></span></div>
<div class="row" style="top:425.5px"><span class="c num" style="left:7px">12116</span><span class="c " style="left:50px">projet_BM</span><span class="c dash" style="left:212.8px">-</span><span class="c dash" style="left:315.8px">-</span><span class="c " style="left:424px">sprint</span><span class="c dash" style="left:524.8px">-</span><span class="c " style="left:619px">CT</span><span class="ic" style="left:808px;top:10px"><svg class="chev" width="14" height="13" viewBox="0 0 14 13"><path d="M0.2 0.4 L7 4.6 L13.6 0.4 L13.6 3.1 L7 7.3 L0.2 3.1 Z M0.2 5.4 L7 9.5 L13.6 5.4 L13.6 8.1 L7 12.4 L0.2 8.1 Z" fill="#0f80c8"/></svg></span><span class="c dash" style="left:835.8px">-</span><span class="c dash" style="left:905.8px">-</span><span class="c dash" style="left:1011.8px">-</span><span class="ic" style="left:1126px;top:6.5px"><svg class="mode" width="20" height="20" viewBox="0 0 20 20"><circle cx="10" cy="7.93" r="1.6" fill="none" stroke="#111" stroke-width="1.15"/><path d="M5.6 15.5 Q6.2 12.7 10 12.7 Q13.8 12.7 14.4 15.5 Z" fill="none" stroke="#111" stroke-width="1.15" stroke-linejoin="round"/></svg></span><span class="st" style="left:1187px;background:#006c4f"></span><span class="c " style="left:1231px">admin</span><span class="ic" style="left:1322px;top:7px"><svg class="play" width="20" height="20" viewBox="0 0 20 20"><circle cx="10" cy="10.3" r="8.25" fill="none" stroke="#7a1ea5" stroke-width="1.35"/><path d="M8.6 6.2 L13.6 10 L8.6 13.7 Z" fill="none" stroke="#7a1ea5" stroke-width="1.25" stroke-linejoin="round"/></svg></span></div>
<div class="row" style="top:460.5px"><span class="c num" style="left:7px">12117</span><span class="c " style="left:50px">projet_BM</span><span class="c dash" style="left:212.8px">-</span><span class="c dash" style="left:315.8px">-</span><span class="c " style="left:424px">sprint</span><span class="c dash" style="left:524.8px">-</span><span class="c " style="left:619px">CT2</span><span class="ic" style="left:808px;top:10px"><svg class="chev" width="14" height="13" viewBox="0 0 14 13"><path d="M0.2 0.4 L7 4.6 L13.6 0.4 L13.6 3.1 L7 7.3 L0.2 3.1 Z M0.2 5.4 L7 9.5 L13.6 5.4 L13.6 8.1 L7 12.4 L0.2 8.1 Z" fill="#0f80c8"/></svg></span><span class="c dash" style="left:835.8px">-</span><span class="c dash" style="left:905.8px">-</span><span class="c dash" style="left:1011.8px">-</span><span class="ic" style="left:1126px;top:6.5px"><svg class="mode" width="20" height="20" viewBox="0 0 20 20"><circle cx="10" cy="7.93" r="1.6" fill="none" stroke="#111" stroke-width="1.15"/><path d="M5.6 15.5 Q6.2 12.7 10 12.7 Q13.8 12.7 14.4 15.5 Z" fill="none" stroke="#111" stroke-width="1.15" stroke-linejoin="round"/></svg></span><span class="st" style="left:1187px;background:#006c4f"></span><span class="c " style="left:1231px">admin</span><span class="ic" style="left:1322px;top:7px"><svg class="play" width="20" height="20" viewBox="0 0 20 20"><circle cx="10" cy="10.3" r="8.25" fill="none" stroke="#7a1ea5" stroke-width="1.35"/><path d="M8.6 6.2 L13.6 10 L8.6 13.7 Z" fill="none" stroke="#7a1ea5" stroke-width="1.25" stroke-linejoin="round"/></svg></span></div>
<div class="row" style="top:495.5px"><span class="c num" style="left:7px">12118</span><span class="c " style="left:50px">projet_BM</span><span class="c dash" style="left:212.8px">-</span><span class="c dash" style="left:315.8px">-</span><span class="c " style="left:424px">sprint</span><span class="c dash" style="left:524.8px">-</span><span class="c " style="left:619px">CT Gherkin</span><span class="ic" style="left:808px;top:10px"><svg class="chev" width="14" height="13" viewBox="0 0 14 13"><path d="M0.2 0.4 L7 4.6 L13.6 0.4 L13.6 3.1 L7 7.3 L0.2 3.1 Z M0.2 5.4 L7 9.5 L13.6 5.4 L13.6 8.1 L7 12.4 L0.2 8.1 Z" fill="#0f80c8"/></svg></span><span class="c dash" style="left:835.8px">-</span><span class="c dash" style="left:905.8px">-</span><span class="c dash" style="left:1011.8px">-</span><span class="ic" style="left:1126px;top:6.5px"><svg class="mode" width="20" height="20" viewBox="0 0 20 20"><circle cx="10" cy="7.93" r="1.6" fill="none" stroke="#111" stroke-width="1.15"/><path d="M5.6 15.5 Q6.2 12.7 10 12.7 Q13.8 12.7 14.4 15.5 Z" fill="none" stroke="#111" stroke-width="1.15" stroke-linejoin="round"/></svg></span><span class="st" style="left:1187px;background:#006c4f"></span><span class="c " style="left:1231px">admin</span><span class="ic" style="left:1322px;top:7px"><svg class="play" width="20" height="20" viewBox="0 0 20 20"><circle cx="10" cy="10.3" r="8.25" fill="none" stroke="#7a1ea5" stroke-width="1.35"/><path d="M8.6 6.2 L13.6 10 L8.6 13.7 Z" fill="none" stroke="#7a1ea5" stroke-width="1.25" stroke-linejoin="round"/></svg></span></div>
<div class="row" style="top:530.5px"><span class="c num" style="left:7px">12119</span><span class="c " style="left:50px">projet_BM</span><span class="c dash" style="left:212.8px">-</span><span class="c dash" style="left:315.8px">-</span><span class="c " style="left:424px">sprint</span><span class="c dash" style="left:524.8px">-</span><span class="c " style="left:619px">CT3</span><span class="ic" style="left:808px;top:10px"><svg class="chev" width="14" height="13" viewBox="0 0 14 13"><path d="M0.2 0.4 L7 4.6 L13.6 0.4 L13.6 3.1 L7 7.3 L0.2 3.1 Z M0.2 5.4 L7 9.5 L13.6 5.4 L13.6 8.1 L7 12.4 L0.2 8.1 Z" fill="#0f80c8"/></svg></span><span class="c dash" style="left:835.8px">-</span><span class="c dash" style="left:905.8px">-</span><span class="c dash" style="left:1011.8px">-</span><span class="ic" style="left:1126px;top:6.5px"><svg class="mode" width="20" height="20" viewBox="0 0 20 20"><circle cx="10" cy="7.93" r="1.6" fill="none" stroke="#111" stroke-width="1.15"/><path d="M5.6 15.5 Q6.2 12.7 10 12.7 Q13.8 12.7 14.4 15.5 Z" fill="none" stroke="#111" stroke-width="1.15" stroke-linejoin="round"/></svg></span><span class="st" style="left:1187px;background:#a3afb7"></span><span class="c dash" style="left:1231.8px">-</span><span class="ic" style="left:1322px;top:7px"><svg class="play" width="20" height="20" viewBox="0 0 20 20"><circle cx="10" cy="10.3" r="8.25" fill="none" stroke="#7a1ea5" stroke-width="1.35"/><path d="M8.6 6.2 L13.6 10 L8.6 13.7 Z" fill="none" stroke="#7a1ea5" stroke-width="1.25" stroke-linejoin="round"/></svg></span></div>
<div class="row" style="top:565.5px"><span class="c num" style="left:7px">12120</span><span class="c " style="left:50px">projet_BM</span><span class="c dash" style="left:212.8px">-</span><span class="c dash" style="left:315.8px">-</span><span class="c " style="left:424px">sprint 2</span><span class="c dash" style="left:524.8px">-</span><span class="c " style="left:619px">CT2</span><span class="ic" style="left:808px;top:10px"><svg class="chev" width="14" height="13" viewBox="0 0 14 13"><path d="M0.2 0.4 L7 4.6 L13.6 0.4 L13.6 3.1 L7 7.3 L0.2 3.1 Z M0.2 5.4 L7 9.5 L13.6 5.4 L13.6 8.1 L7 12.4 L0.2 8.1 Z" fill="#0f80c8"/></svg></span><span class="c dash" style="left:835.8px">-</span><span class="c dash" style="left:905.8px">-</span><span class="c dash" style="left:1011.8px">-</span><span class="ic" style="left:1126px;top:6.5px"><svg class="mode" width="20" height="20" viewBox="0 0 20 20"><circle cx="10" cy="7.93" r="1.6" fill="none" stroke="#111" stroke-width="1.15"/><path d="M5.6 15.5 Q6.2 12.7 10 12.7 Q13.8 12.7 14.4 15.5 Z" fill="none" stroke="#111" stroke-width="1.15" stroke-linejoin="round"/></svg></span><span class="st" style="left:1187px;background:#a3afb7"></span><span class="c dash" style="left:1231.8px">-</span><span class="ic" style="left:1322px;top:7px"><svg class="play" width="20" height="20" viewBox="0 0 20 20"><circle cx="10" cy="10.3" r="8.25" fill="none" stroke="#7a1ea5" stroke-width="1.35"/><path d="M8.6 6.2 L13.6 10 L8.6 13.7 Z" fill="none" stroke="#7a1ea5" stroke-width="1.25" stroke-linejoin="round"/></svg></span></div>
<div class="row" style="top:600.5px"><span class="c num" style="left:7px">12121</span><span class="c " style="left:50px">projet_BM</span><span class="c dash" style="left:212.8px">-</span><span class="c dash" style="left:315.8px">-</span><span class="c " style="left:424px">sprint test</span><span class="c dash" style="left:524.8px">-</span><span class="c " style="left:619px">CT2</span><span class="ic" style="left:808px;top:10px"><svg class="chev" width="14" height="13" viewBox="0 0 14 13"><path d="M0.2 0.4 L7 4.6 L13.6 0.4 L13.6 3.1 L7 7.3 L0.2 3.1 Z M0.2 5.4 L7 9.5 L13.6 5.4 L13.6 8.1 L7 12.4 L0.2 8.1 Z" fill="#0f80c8"/></svg></span><span class="c dash" style="left:835.8px">-</span><span class="c dash" style="left:905.8px">-</span><span class="c dash" style="left:1011.8px">-</span><span class="ic" style="left:1126px;top:6.5px"><svg class="mode" width="20" height="20" viewBox="0 0 20 20"><circle cx="10" cy="7.93" r="1.6" fill="none" stroke="#111" stroke-width="1.15"/><path d="M5.6 15.5 Q6.2 12.7 10 12.7 Q13.8 12.7 14.4 15.5 Z" fill="none" stroke="#111" stroke-width="1.15" stroke-linejoin="round"/></svg></span><span class="st" style="left:1187px;background:#a3afb7"></span><span class="c dash" style="left:1231.8px">-</span><span class="ic" style="left:1322px;top:7px"><svg class="play" width="20" height="20" viewBox="0 0 20 20"><circle cx="10" cy="10.3" r="8.25" fill="none" stroke="#7a1ea5" stroke-width="1.35"/><path d="M8.6 6.2 L13.6 10 L8.6 13.7 Z" fill="none" stroke="#7a1ea5" stroke-width="1.25" stroke-linejoin="round"/></svg></span></div>
<div class="row" style="top:635.5px"><span class="c num" style="left:7px">12122</span><span class="c " style="left:50px">projet_BM</span><span class="c dash" style="left:212.8px">-</span><span class="c dash" style="left:315.8px">-</span><span class="c " style="left:424px">sprint test</span><span class="c dash" style="left:524.8px">-</span><span class="c " style="left:619px">CT explo</span><span class="ic" style="left:808px;top:10px"><svg class="chev" width="14" height="13" viewBox="0 0 14 13"><path d="M0.2 0.4 L7 4.6 L13.6 0.4 L13.6 3.1 L7 7.3 L0.2 3.1 Z M0.2 5.4 L7 9.5 L13.6 5.4 L13.6 8.1 L7 12.4 L0.2 8.1 Z" fill="#0f80c8"/></svg></span><span class="c dash" style="left:835.8px">-</span><span class="c dash" style="left:905.8px">-</span><span class="c dash" style="left:1011.8px">-</span><span class="ic" style="left:1126px;top:6.5px"><svg class="mode" width="20" height="20" viewBox="0 0 20 20"><circle cx="10" cy="10.9" r="5.4" fill="none" stroke="#111" stroke-width="1.1"/><path d="M6.9 14 L9.28 10.1 L13.1 7.6 L10.72 11.5 Z" fill="#111"/></svg></span><span class="st" style="left:1187px;background:#006c4f"></span><span class="c " style="left:1231px">admin</span><span class="ic" style="left:1322px;top:7px"><svg class="play" width="20" height="20" viewBox="0 0 20 20"><circle cx="10" cy="10.3" r="8.25" fill="none" stroke="#7a1ea5" stroke-width="1.35"/><path d="M8.6 6.2 L13.6 10 L8.6 13.7 Z" fill="none" stroke="#7a1ea5" stroke-width="1.25" stroke-linejoin="round"/></svg></span></div>
<div class="row" style="top:670.5px"><span class="c num" style="left:7px">12123</span><span class="c proj" style="left:50px">Projet_BM_avec_GitLab...</span><span class="c " style="left:212px">camp1</span><span class="c " style="left:315px">it1</span><span class="c dash" style="left:424.8px">-</span><span class="c dash" style="left:524.8px">-</span><span class="c dash" style="left:619.8px">-</span><span class="c dash" style="left:813.8px">-</span><span class="c dash" style="left:835.8px">-</span><span class="c dash" style="left:905.8px">-</span><span class="c dash" style="left:1011.8px">-</span><span class="ic" style="left:1126px;top:6.5px"><svg class="mode" width="20" height="20" viewBox="0 0 20 20"><circle cx="10" cy="7.93" r="1.6" fill="none" stroke="#111" stroke-width="1.15"/><path d="M5.6 15.5 Q6.2 12.7 10 12.7 Q13.8 12.7 14.4 15.5 Z" fill="none" stroke="#111" stroke-width="1.15" stroke-linejoin="round"/></svg></span><span class="st" style="left:1187px;background:#cd1529"></span><span class="c " style="left:1231px">admin</span><span class="ic" style="left:1322px;top:7px"><svg class="play" width="20" height="20" viewBox="0 0 20 20"><circle cx="10" cy="10.3" r="8.25" fill="none" stroke="#7a1ea5" stroke-width="1.35"/><path d="M8.6 6.2 L13.6 10 L8.6 13.7 Z" fill="none" stroke="#7a1ea5" stroke-width="1.25" stroke-linejoin="round"/></svg></span></div>
<div class="row" style="top:705.5px"><span class="c num" style="left:7px">12124</span><span class="c proj" style="left:50px">Projet_BM_avec_GitLab...</span><span class="c " style="left:212px">camp1</span><span class="c " style="left:315px">it1</span><span class="c dash" style="left:424.8px">-</span><span class="c dash" style="left:524.8px">-</span><span class="c " style="left:619px">CT3</span><span class="ic" style="left:808px;top:10px"><svg class="chev" width="14" height="13" viewBox="0 0 14 13"><path d="M0.2 0.4 L7 4.6 L13.6 0.4 L13.6 3.1 L7 7.3 L0.2 3.1 Z M0.2 5.4 L7 9.5 L13.6 5.4 L13.6 8.1 L7 12.4 L0.2 8.1 Z" fill="#0f80c8"/></svg></span><span class="c dash" style="left:835.8px">-</span><span class="c dash" style="left:905.8px">-</span><span class="c dash" style="left:1011.8px">-</span><span class="ic" style="left:1126px;top:6.5px"><svg class="mode" width="20" height="20" viewBox="0 0 20 20"><circle cx="10" cy="7.93" r="1.6" fill="none" stroke="#111" stroke-width="1.15"/><path d="M5.6 15.5 Q6.2 12.7 10 12.7 Q13.8 12.7 14.4 15.5 Z" fill="none" stroke="#111" stroke-width="1.15" stroke-linejoin="round"/></svg></span><span class="st" style="left:1187px;background:#a3afb7"></span><span class="c dash" style="left:1231.8px">-</span><span class="ic" style="left:1322px;top:7px"><svg class="play" width="20" height="20" viewBox="0 0 20 20"><circle cx="10" cy="10.3" r="8.25" fill="none" stroke="#7a1ea5" stroke-width="1.35"/><path d="M8.6 6.2 L13.6 10 L8.6 13.7 Z" fill="none" stroke="#7a1ea5" stroke-width="1.25" stroke-linejoin="round"/></svg></span></div>
<div class="row" style="top:740.5px"><span class="c num" style="left:7px">12125</span><span class="c proj" style="left:50px">Projet_BM_avec_GitLab...</span><span class="c " style="left:212px">camp1</span><span class="c " style="left:315px">it1</span><span class="c dash" style="left:424.8px">-</span><span class="c dash" style="left:524.8px">-</span><span class="c " style="left:619px">aaaaaa</span><span class="ic" style="left:808px;top:10px"><svg class="chev" width="14" height="13" viewBox="0 0 14 13"><path d="M0.2 0.4 L7 4.6 L13.6 0.4 L13.6 3.1 L7 7.3 L0.2 3.1 Z M0.2 5.4 L7 9.5 L13.6 5.4 L13.6 8.1 L7 12.4 L0.2 8.1 Z" fill="#0f80c8"/></svg></span><span class="c dash" style="left:835.8px">-</span><span class="c " style="left:905px">suite1</span><span class="c dash" style="left:1011.8px">-</span><span class="ic" style="left:1126px;top:6.5px"><svg class="mode" width="20" height="20" viewBox="0 0 20 20"><circle cx="10" cy="7.93" r="1.6" fill="none" stroke="#111" stroke-width="1.15"/><path d="M5.6 15.5 Q6.2 12.7 10 12.7 Q13.8 12.7 14.4 15.5 Z" fill="none" stroke="#111" stroke-width="1.15" stroke-linejoin="round"/></svg></span><span class="st" style="left:1187px;background:#a3afb7"></span><span class="c dash" style="left:1231.8px">-</span><span class="ic" style="left:1322px;top:7px"><svg class="play" width="20" height="20" viewBox="0 0 20 20"><circle cx="10" cy="10.3" r="8.25" fill="none" stroke="#7a1ea5" stroke-width="1.35"/><path d="M8.6 6.2 L13.6 10 L8.6 13.7 Z" fill="none" stroke="#7a1ea5" stroke-width="1.25" stroke-linejoin="round"/></svg></span></div>
<div class="row" style="top:775.5px"><span class="c num" style="left:7px">12126</span><span class="c proj" style="left:50px">Projet_BM_avec_GitLab...</span><span class="c dash" style="left:212.8px">-</span><span class="c dash" style="left:315.8px">-</span><span class="c " style="left:424px">sprint1</span><span class="c dash" style="left:524.8px">-</span><span class="c " style="left:619px">CT1</span><span class="ic" style="left:808px;top:10px"><svg class="chev" width="14" height="13" viewBox="0 0 14 13"><path d="M0.2 0.4 L7 4.6 L13.6 0.4 L13.6 3.1 L7 7.3 L0.2 3.1 Z M0.2 5.4 L7 9.5 L13.6 5.4 L13.6 8.1 L7 12.4 L0.2 8.1 Z" fill="#0f80c8"/></svg></span><span class="c dash" style="left:835.8px">-</span><span class="c dash" style="left:905.8px">-</span><span class="c dash" style="left:1011.8px">-</span><span class="ic" style="left:1126px;top:6.5px"><svg class="mode" width="20" height="20" viewBox="0 0 20 20"><circle cx="10" cy="7.93" r="1.6" fill="none" stroke="#111" stroke-width="1.15"/><path d="M5.6 15.5 Q6.2 12.7 10 12.7 Q13.8 12.7 14.4 15.5 Z" fill="none" stroke="#111" stroke-width="1.15" stroke-linejoin="round"/></svg></span><span class="st" style="left:1187px;background:#a3afb7"></span><span class="c dash" style="left:1231.8px">-</span><span class="ic" style="left:1322px;top:7px"><svg class="play" width="20" height="20" viewBox="0 0 20 20"><circle cx="10" cy="10.3" r="8.25" fill="none" stroke="#7a1ea5" stroke-width="1.35"/><path d="M8.6 6.2 L13.6 10 L8.6 13.7 Z" fill="none" stroke="#7a1ea5" stroke-width="1.25" stroke-linejoin="round"/></svg></span></div>
<div class="row" style="top:810.5px"><span class="c num" style="left:7px">12127</span><span class="c proj" style="left:50px">Projet_BM_avec_GitLab...</span><span class="c dash" style="left:212.8px">-</span><span class="c dash" style="left:315.8px">-</span><span class="c " style="left:424px">sprint1</span><span class="c dash" style="left:524.8px">-</span><span class="c " style="left:619px">CT2</span><span class="ic" style="left:808px;top:10px"><svg class="chev" width="14" height="13" viewBox="0 0 14 13"><path d="M0.2 0.4 L7 4.6 L13.6 0.4 L13.6 3.1 L7 7.3 L0.2 3.1 Z M0.2 5.4 L7 9.5 L13.6 5.4 L13.6 8.1 L7 12.4 L0.2 8.1 Z" fill="#0f80c8"/></svg></span><span class="c dash" style="left:835.8px">-</span><span class="c dash" style="left:905.8px">-</span><span class="c dash" style="left:1011.8px">-</span><span class="ic" style="left:1126px;top:6.5px"><svg class="mode" width="20" height="20" viewBox="0 0 20 20"><circle cx="10" cy="7.93" r="1.6" fill="none" stroke="#111" stroke-width="1.15"/><path d="M5.6 15.5 Q6.2 12.7 10 12.7 Q13.8 12.7 14.4 15.5 Z" fill="none" stroke="#111" stroke-width="1.15" stroke-linejoin="round"/></svg></span><span class="st" style="left:1187px;background:#a3afb7"></span><span class="c dash" style="left:1231.8px">-</span><span class="ic" style="left:1322px;top:7px"><svg class="play" width="20" height="20" viewBox="0 0 20 20"><circle cx="10" cy="10.3" r="8.25" fill="none" stroke="#7a1ea5" stroke-width="1.35"/><path d="M8.6 6.2 L13.6 10 L8.6 13.7 Z" fill="none" stroke="#7a1ea5" stroke-width="1.25" stroke-linejoin="round"/></svg></span></div>
  </div>
  <div id="pinsh2"></div><div id="pinsh3"></div><div id="pinshadow"></div>
  <div id="vscroll">
    <svg class="abs" style="left:3px;top:5px" width="10" height="6" viewBox="0 0 10 6"><path d="M0 6 L5 0.5 L10 6 Z" fill="#8b8b8b"/></svg>
    <div class="abs" style="left:3px;top:101px;width:9px;height:19px;border-radius:4.5px;background:#8b8b8b"></div>
    <svg class="abs" style="left:3px;top:816px" width="10" height="6" viewBox="0 0 10 6"><path d="M0 0 L5 5.5 L10 0 Z" fill="#8b8b8b"/></svg>
  </div>
  <div id="hscroll">
    <svg class="abs" style="left:4.5px;top:3px" width="6" height="9" viewBox="0 0 6 9"><path d="M6 0 L0.5 4.5 L6 9 Z" fill="#8b8b8b"/></svg>
    <div class="abs" style="left:18px;top:3px;width:1133px;height:9px;border-radius:4.5px;background:#8b8b8b"></div>
    <svg class="abs" style="left:1251px;top:3px" width="6" height="9" viewBox="0 0 6 9"><path d="M0 0 L5.5 4.5 L0 9 Z" fill="#8b8b8b"/></svg>
  </div>
</div>
<!-- footer -->
<div class="abs" style="left:534px;top:989px;font-size:14px;line-height:20px;letter-spacing:-0.1px">12001 - 13000 / 14334</div>
<div class="abs" style="left:1638px;top:987px;width:80px;height:24px;border:1px solid #d9d9d9;border-radius:3px"></div>
<div class="abs" style="left:1647px;top:989px;font-size:14px;line-height:20px">1000</div>
<svg class="abs" style="left:1695px;top:994px" width="12" height="9" viewBox="0 0 12 9"><path d="M1 1 L6 8 L11 1" fill="none" stroke="#7a1ea5" stroke-width="1.2"/></svg>
<div class="abs" style="left:1728px;top:987px;width:24px;height:24px;border:1px solid #d9d9d9;border-radius:50%"></div>
<svg class="abs" style="left:1734px;top:993px;overflow:visible" width="12" height="12" viewBox="0 0 12 12"><path d="M6.2 0.5 L1.2 5.9 L6.2 11.4 M10.9 0.5 L5.9 5.9 L10.9 11.4" fill="none" stroke="#222" stroke-width="1.25"/></svg>
<div class="abs" style="left:1757px;top:987px;width:24px;height:24px;border:1px solid #d9d9d9;border-radius:50%"></div>
<svg class="abs" style="left:1763px;top:993px;overflow:visible" width="12" height="12" viewBox="0 0 12 12"><path d="M9.2 0.5 L1.9 5.9 L9.2 11.4" fill="none" stroke="#222" stroke-width="1.25"/></svg>
<div class="abs" style="left:1792px;top:988.3px;font-size:14px;line-height:20px;letter-spacing:-0.1px">13/15</div>
<div class="abs" style="left:1837px;top:987px;width:24px;height:24px;border:1px solid #d9d9d9;border-radius:50%"></div>
<svg class="abs" style="left:1843px;top:993px;overflow:visible" width="12" height="12" viewBox="0 0 12 12"><path d="M2.8 0.5 L9.7 5.9 L2.8 11.4" fill="none" stroke="#222" stroke-width="1.25"/></svg>
<div class="abs" style="left:1866px;top:987px;width:24px;height:24px;border:1px solid #d9d9d9;border-radius:50%"></div>
<svg class="abs" style="left:1872px;top:993px;overflow:visible" width="12" height="12" viewBox="0 0 12 12"><path d="M0.5 0.5 L5.2 5.9 L0.5 11.4 M5.3 0.5 L10 5.9 L5.3 11.4" fill="none" stroke="#222" stroke-width="1.25"/></svg>
</body></html>
